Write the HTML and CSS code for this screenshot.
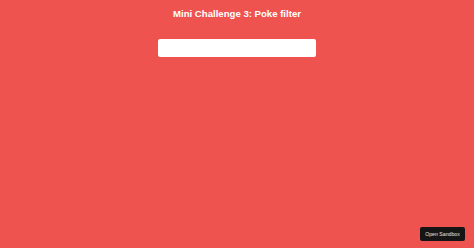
FILE: index.html
```html
<!DOCTYPE html>
<html lang="en">
<head>
<meta charset="utf-8">
<title>Mini Challenge 3: Poke filter</title>
<link rel="stylesheet" href="styles.css">
</head>
<body>
<main class="app">
  <h1 class="title">Mini Challenge 3: Poke filter</h1>
  <input class="search" type="text" aria-label="Filter">
</main>
<a class="sandbox-btn" href="#">Open Sandbox</a>
</body>
</html>
```
FILE: styles.css
```css
html, body {
  margin: 0;
  padding: 0;
  height: 100%;
}
body {
  background: #ef5350;
  font-family: "Liberation Sans", Arial, sans-serif;
}
.app {
  display: flex;
  flex-direction: column;
  align-items: center;
  padding-top: 8px;
}
.title {
  margin: 0;
  color: #fff;
  font-size: 9.6px;
  font-weight: bold;
  line-height: 11px;
}
.search {
  margin-top: 20px;
  width: 158px;
  height: 18px;
  box-sizing: border-box;
  border: none;
  border-radius: 2px;
  background: #fff;
  padding: 0 4px;
  outline: none;
}
.sandbox-btn {
  position: fixed;
  right: 9px;
  bottom: 7px;
  width: 45px;
  height: 14px;
  box-sizing: border-box;
  display: flex;
  align-items: center;
  justify-content: center;
  background: #151515;
  color: #e6e6e6;
  border-radius: 2px;
  font-size: 5.2px;
  text-decoration: none;
  white-space: nowrap;
}
```
